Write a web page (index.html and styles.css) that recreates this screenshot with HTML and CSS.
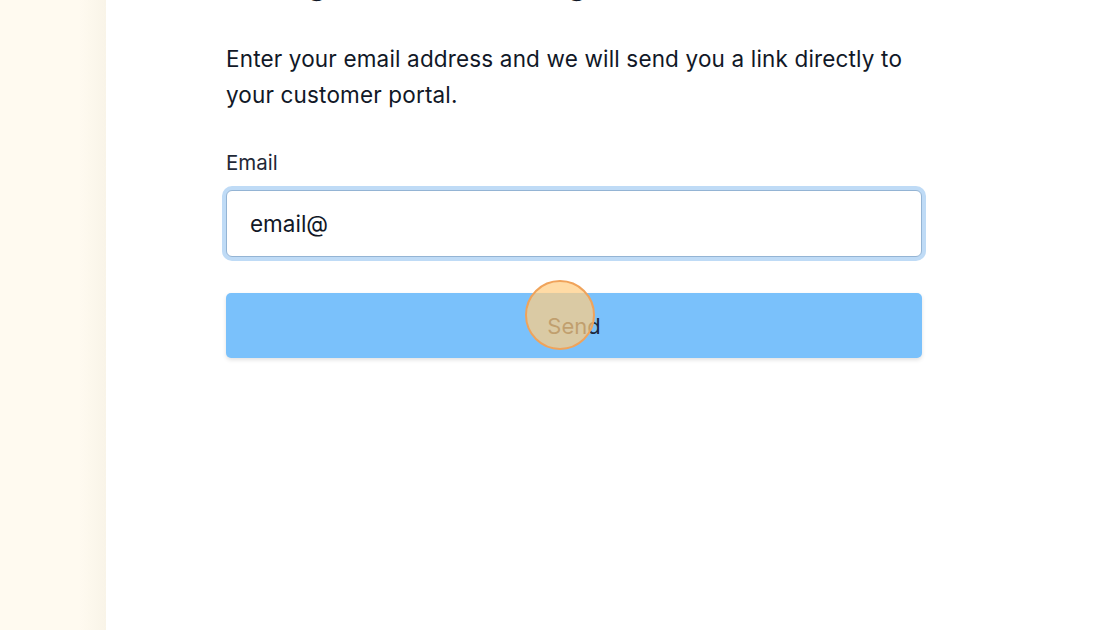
FILE: index.html
```html
<!DOCTYPE html>
<html lang="en">
<head>
<meta charset="utf-8">
<title>Customer portal</title>
<link rel="stylesheet" href="styles.css">
</head>
<body>
<div class="page">
  <aside class="side"></aside>
  <main class="main">
    <div class="content">
      <h1 class="title">Manage Account Settings</h1>
      <p class="lead">Enter your email address and we will send you a link directly to your customer portal.</p>
      <form class="form">
        <label class="label" for="email">Email</label>
        <div class="field">
          <input id="email" class="input" type="text" value="email@">
        </div>
        <div class="btn-wrap">
          <button type="button" class="btn">Send</button>
          <span class="click"></span>
        </div>
      </form>
    </div>
  </main>
</div>
</body>
</html>
```
FILE: styles.css
```css
* { box-sizing: border-box; }
html, body { margin: 0; padding: 0; }
body {
  width: 1120px;
  height: 630px;
  overflow: hidden;
  background: #ffffff;
  font-family: Inter, "Noto Sans", sans-serif;
  color: #111827;
}
.page {
  display: flex;
  height: 630px;
}
.side {
  width: 106px;
  flex: none;
  background: linear-gradient(to right, #fffaf0 0%, #fffaf0 75%, #f9f4e8 100%);
}
.main {
  flex: 1;
  background: #fff;
}
.content {
  width: 696px;
  margin-left: 120px;
  margin-top: -35px;
}
.title {
  margin: 0;
  font-size: 30px;
  line-height: 38px;
  font-weight: 700;
  color: #111827;
}
.lead {
  margin: 38px 0 0;
  font-size: 22.5px;
  line-height: 36px;
  color: #111827;
  letter-spacing: 0.16px;
}
.form {
  margin-top: 36px;
  display: flex;
  flex-direction: column;
}
.label {
  font-size: 20.5px;
  line-height: 28px;
  font-weight: 400;
  color: #1f2937;
}
.field {
  margin-top: 13px;
}
.input {
  width: 696px;
  height: 67px;
  display: block;
  border: 1.5px solid #94b4d4;
  border-radius: 6px;
  box-shadow: 0 0 0 4px #bfdbf6;
  padding: 0 23px;
  font-family: Inter, "Noto Sans", sans-serif;
  font-size: 22.5px;
  color: #111827;
  outline: none;
  background: #fff;
}
.btn-wrap {
  position: relative;
  margin-top: 36px;
}
.btn {
  display: block;
  width: 696px;
  height: 65px;
  border: none;
  border-radius: 5px;
  background: #7ac1fb;
  box-shadow: 0 2px 4px rgba(0,0,0,0.12);
  font-family: Inter, "Noto Sans", sans-serif;
  font-size: 22px;
  color: #1e293b;
  padding: 0;
}
.click {
  position: absolute;
  left: 299px;
  top: -13px;
  width: 70px;
  height: 70px;
  border-radius: 50%;
  background: rgba(255, 205, 130, 0.72);
  border: 2px solid #f0a35a;
}
```
